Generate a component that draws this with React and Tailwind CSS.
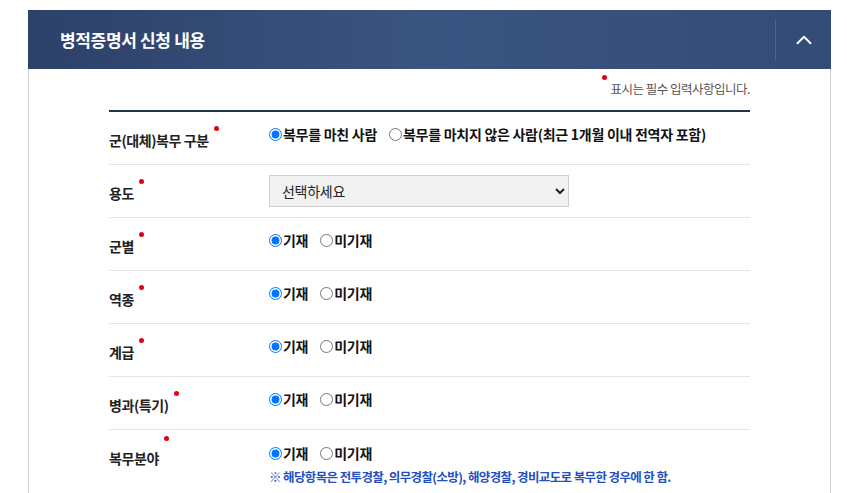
import React from 'react';
import { ChevronUp } from 'lucide-react';

const fields = [
  { id: 'service', label: '군(대체)복무 구분', type: 'service' },
  { id: 'purpose', label: '용도', type: 'select' },
  { id: 'branch', label: '군별', type: 'yn' },
  { id: 'duty', label: '역종', type: 'yn' },
  { id: 'rank', label: '계급', type: 'yn' },
  { id: 'specialty', label: '병과(특기)', type: 'yn' },
  { id: 'field', label: '복무분야', type: 'yn', note: true },
];

const Dot = () => (
  <span className="inline-block w-[5px] h-[5px] rounded-full bg-[#e60012] ml-[5px] relative -top-[12px]" />
);

const Radio = ({ name, label, checked }) => (
  <label className="flex items-center font-bold text-[14px] text-[#111] tracking-[-0.02em]">
    <input type="radio" name={name} defaultChecked={checked} className="m-0 w-[13px] h-[13px]" />
    <span className="ml-[1px]">{label}</span>
  </label>
);

const FieldValue = ({ field }) => {
  if (field.type === 'select') {
    return (
      <div className="flex items-center h-full">
        <select className="w-[300px] h-[32px] bg-[#f2f2f2] border border-[#cfcfcf] pl-[8px] pr-[6px] text-[14px] text-[#222] tracking-[-0.02em]">
          <option>선택하세요</option>
        </select>
      </div>
    );
  }
  if (field.type === 'service') {
    return (
      <div className="flex items-center gap-[12px] h-full pb-[8px]">
        <Radio name={field.id} label="복무를 마친 사람" checked />
        <Radio name={field.id} label="복무를 마치지 않은 사람(최근 1개월 이내 전역자 포함)" />
      </div>
    );
  }
  return (
    <div className={`flex flex-col h-full ${field.note ? 'pt-[13px]' : 'justify-center pb-[8px]'}`}>
      <div className="flex items-center gap-[12px]">
        <Radio name={field.id} label="기재" checked />
        <Radio name={field.id} label="미기재" />
      </div>
      {field.note && (
        <p className="mt-[4px] text-[12.5px] font-bold text-[#1f4fc1] tracking-[-0.05em]">
          ※ 해당항목은 전투경찰, 의무경찰(소방), 해양경찰, 경비교도로 복무한 경우에 한 함.
        </p>
      )}
    </div>
  );
};

export default function App() {
  return (
    <div
      className="w-[847px] h-[493px] overflow-hidden bg-white pt-[10px]"
      style={{ fontFamily: '"Noto Sans CJK KR", "Noto Sans", sans-serif' }}
    >
      <div className="ml-[28px] w-[803px]">
        <div className="h-[59px] flex items-center bg-gradient-to-r from-[#2d4169] via-[#3a5581] to-[#344b77]">
          <h2 className="flex-1 pl-[32px] text-white font-bold text-[17px] tracking-[-0.02em]">병적증명서 신청 내용</h2>
          <div className="w-[56px] h-[40px] border-l border-[#4b6493] flex items-center justify-center">
            <ChevronUp size={26} strokeWidth={1.75} className="text-white" />
          </div>
        </div>

        <div className="border-x border-[#cfcfcf] px-[80px]">
          <div className="h-[41px] flex items-center justify-end">
            <Dot />
            <span className="ml-[3px] text-[12.5px] text-[#555] tracking-[-0.04em]">표시는 필수 입력사항입니다.</span>
          </div>

          <div className="border-t-2 border-[#26334d]">
            {fields.map((field) => (
              <div
                key={field.id}
                className={`flex border-b border-[#e6e6e6] ${field.note ? 'h-[70px]' : 'h-[53px]'}`}
              >
                <div className={`w-[160px] flex pt-[4px] text-[14px] font-bold text-[#222] tracking-[-0.03em] ${field.note ? 'items-start pt-[18px]' : 'items-center'}`}>
                  <span>{field.label}</span>
                  <Dot />
                </div>
                <div className="flex-1">
                  <FieldValue field={field} />
                </div>
              </div>
            ))}
          </div>
        </div>
      </div>
    </div>
  );
}
